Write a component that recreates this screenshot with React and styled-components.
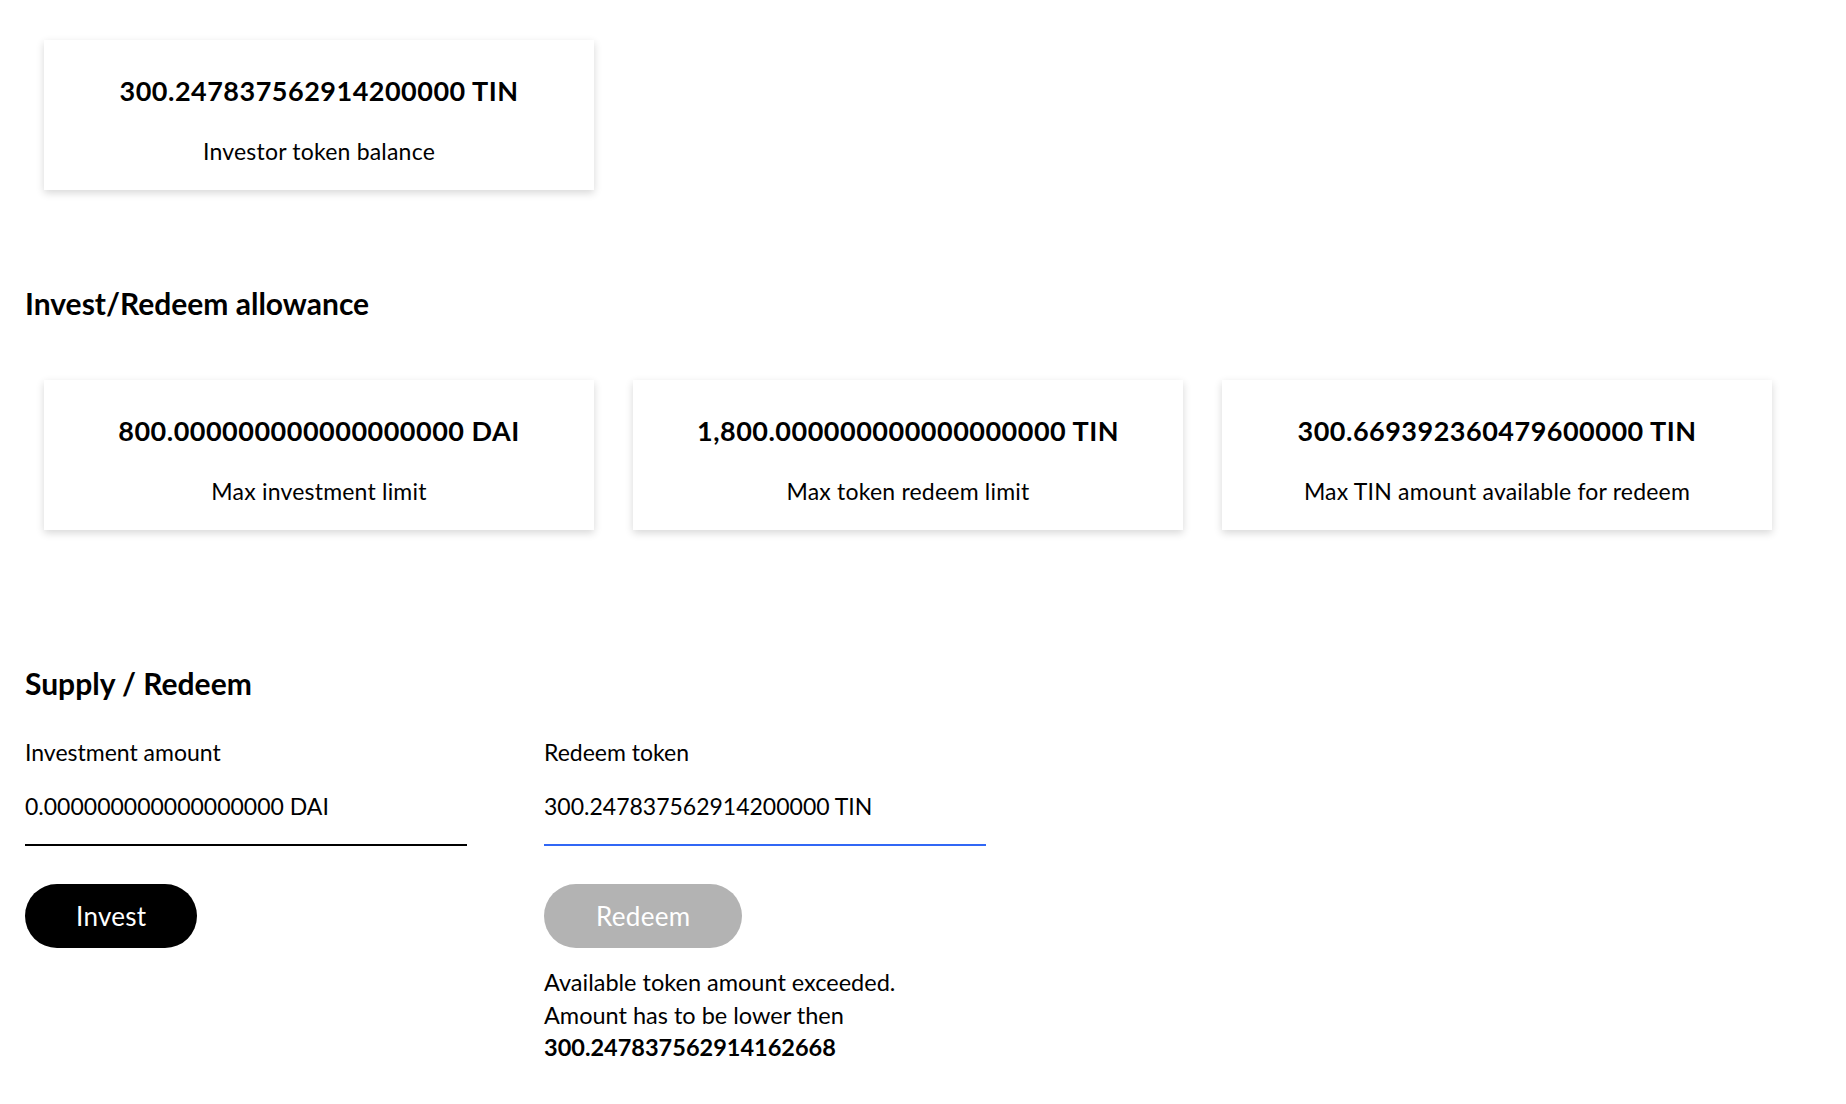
import React from "react";
import styled, { createGlobalStyle } from "styled-components";

const GlobalStyle = createGlobalStyle`
  html, body {
    margin: 0;
    padding: 0;
    background: #ffffff;
    color: #000000;
    font-family: Lato, "Noto Sans", sans-serif;
  }
`;

const Page = styled.div`
  padding: 40px 0 40px 25px;
`;

const CardRow = styled.div`
  display: grid;
  grid-template-columns: repeat(3, 550px);
  column-gap: 39px;
  margin-left: 19px;
`;

const Card = styled.div`
  height: 150px;
  box-sizing: border-box;
  padding-top: 34px;
  background: #ffffff;
  box-shadow: 0 3px 8px rgba(0, 0, 0, 0.16);
  text-align: center;
`;

const CardValue = styled.div`
  font-size: 27px;
  line-height: 34px;
  font-weight: 700;
  letter-spacing: 0.5px;
`;

const CardLabel = styled.div`
  margin-top: 28px;
  font-size: 23px;
  line-height: 30px;
  letter-spacing: 0.2px;
`;

const Heading = styled.h3`
  margin: ${(p) => p.$top}px 0 0;
  font-size: 30px;
  line-height: 36px;
  font-weight: 700;
`;

const Section = styled.div`
  margin-top: ${(p) => p.$top}px;
`;

const FormRow = styled.div`
  display: flex;
  gap: 77px;
  margin-top: 36px;
`;

const Column = styled.div`
  width: 442px;
  display: flex;
  flex-direction: column;
  align-items: flex-start;
`;

const FieldLabel = styled.label`
  font-size: 23px;
  line-height: 30px;
`;

const Input = styled.input`
  width: 100%;
  box-sizing: border-box;
  margin-top: 10px;
  padding: 14px 0 23px;
  border: none;
  border-bottom: 2px solid ${(p) => (p.$focused ? "#3167f5" : "#000000")};
  outline: none;
  font-family: inherit;
  font-size: 23px;
  line-height: 30px;
  color: #000000;
  background: transparent;
`;

const Button = styled.button`
  margin-top: 38px;
  height: 64px;
  padding: 0 ${(p) => p.$pad}px;
  border: none;
  border-radius: 32px;
  background: ${(p) => (p.disabled ? "#b3b3b3" : "#000000")};
  color: #ffffff;
  font-family: inherit;
  font-size: 26px;
  letter-spacing: 0.3px;
  cursor: ${(p) => (p.disabled ? "default" : "pointer")};
`;

const ErrorText = styled.div`
  margin-top: 18px;
  font-size: 23.5px;
  line-height: 32.5px;
  strong {
    font-weight: 700;
  }
`;

function InfoCard({ value, label }) {
  return (
    <Card>
      <CardValue>{value}</CardValue>
      <CardLabel>{label}</CardLabel>
    </Card>
  );
}

export default function App() {
  const allowances = [
    { value: "800.000000000000000000 DAI", label: "Max investment limit" },
    { value: "1,800.000000000000000000 TIN", label: "Max token redeem limit" },
    { value: "300.669392360479600000 TIN", label: "Max TIN amount available for redeem" },
  ];

  return (
    <Page>
      <GlobalStyle />
      <CardRow>
        <InfoCard value="300.247837562914200000 TIN" label="Investor token balance" />
      </CardRow>

      <Heading $top={95}>Invest/Redeem allowance</Heading>
      <Section $top={59}>
        <CardRow>
          {allowances.map((a) => (
            <InfoCard key={a.label} value={a.value} label={a.label} />
          ))}
        </CardRow>
      </Section>

      <Heading $top={135}>Supply / Redeem</Heading>
      <FormRow>
        <Column>
          <FieldLabel>Investment amount</FieldLabel>
          <Input defaultValue="0.000000000000000000 DAI" />
          <Button $pad={51}>Invest</Button>
        </Column>
        <Column>
          <FieldLabel>Redeem token</FieldLabel>
          <Input $focused defaultValue="300.247837562914200000 TIN" />
          <Button disabled $pad={52}>Redeem</Button>
          <ErrorText>
            Available token amount exceeded.
            <br />
            Amount has to be lower then
            <br />
            <strong>300.247837562914162668</strong>
          </ErrorText>
        </Column>
      </FormRow>
    </Page>
  );
}
